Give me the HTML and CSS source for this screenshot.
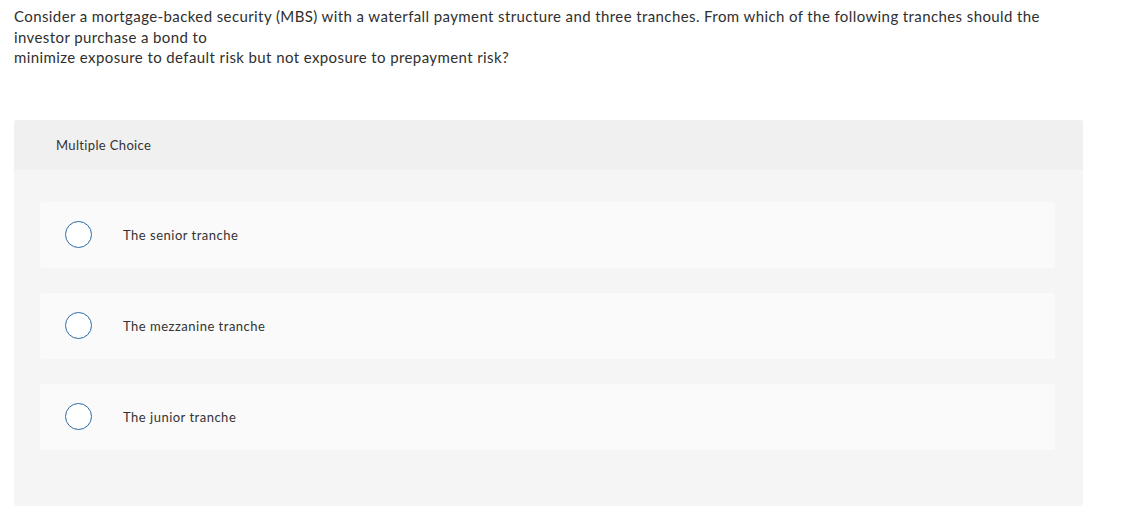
FILE: index.html
```html
<!DOCTYPE html>
<html>
<head>
<meta charset="utf-8">
<link rel="stylesheet" href="styles.css">
</head>
<body>
<div class="question">Consider a mortgage-backed security (MBS) with a waterfall payment structure and three tranches. From which of the following tranches should the<br>investor purchase a bond to<br>minimize exposure to default risk but not exposure to prepayment risk?</div>
<div class="panel">
  <div class="panel-header">Multiple Choice</div>
  <div class="panel-body">
    <div class="option"><span class="radio"></span><span class="label">The senior tranche</span></div>
    <div class="option"><span class="radio"></span><span class="label">The mezzanine tranche</span></div>
    <div class="option"><span class="radio"></span><span class="label">The junior tranche</span></div>
  </div>
</div>
</body>
</html>
```

FILE: styles.css
```css
html, body {
  margin: 0;
  background: #fff;
}
body {
  padding: 6px 14px 0 14px;
  font-family: Lato, "Liberation Sans", sans-serif;
  color: #333;
}
.question {
  font-size: 15px;
  line-height: 20.5px;
  letter-spacing: 0.4px;
  color: #2f2f2f;
  white-space: nowrap;
}
.panel {
  margin-top: 52px;
  width: 1069px;
  border-radius: 3px;
  overflow: hidden;
  background: #f5f5f5;
}
.panel-header {
  height: 50px;
  background: #f0f0f0;
  display: flex;
  align-items: center;
  padding-left: 42px;
  font-size: 13px;
  letter-spacing: 0.35px;
  color: #333;
}
.panel-body {
  padding: 32px 28px 56px 26px;
  display: flex;
  flex-direction: column;
  gap: 25px;
}
.option {
  height: 66px;
  background: #fafafa;
  border-radius: 3px;
  display: flex;
  align-items: center;
  padding-left: 25px;
}
.radio {
  width: 25px;
  height: 25px;
  border: 1.5px solid #2a6aa5;
  border-radius: 50%;
  background: #fff;
  flex: none;
}
.label {
  margin-left: 31px;
  font-size: 13px;
  letter-spacing: 0.5px;
  color: #333;
}
```
